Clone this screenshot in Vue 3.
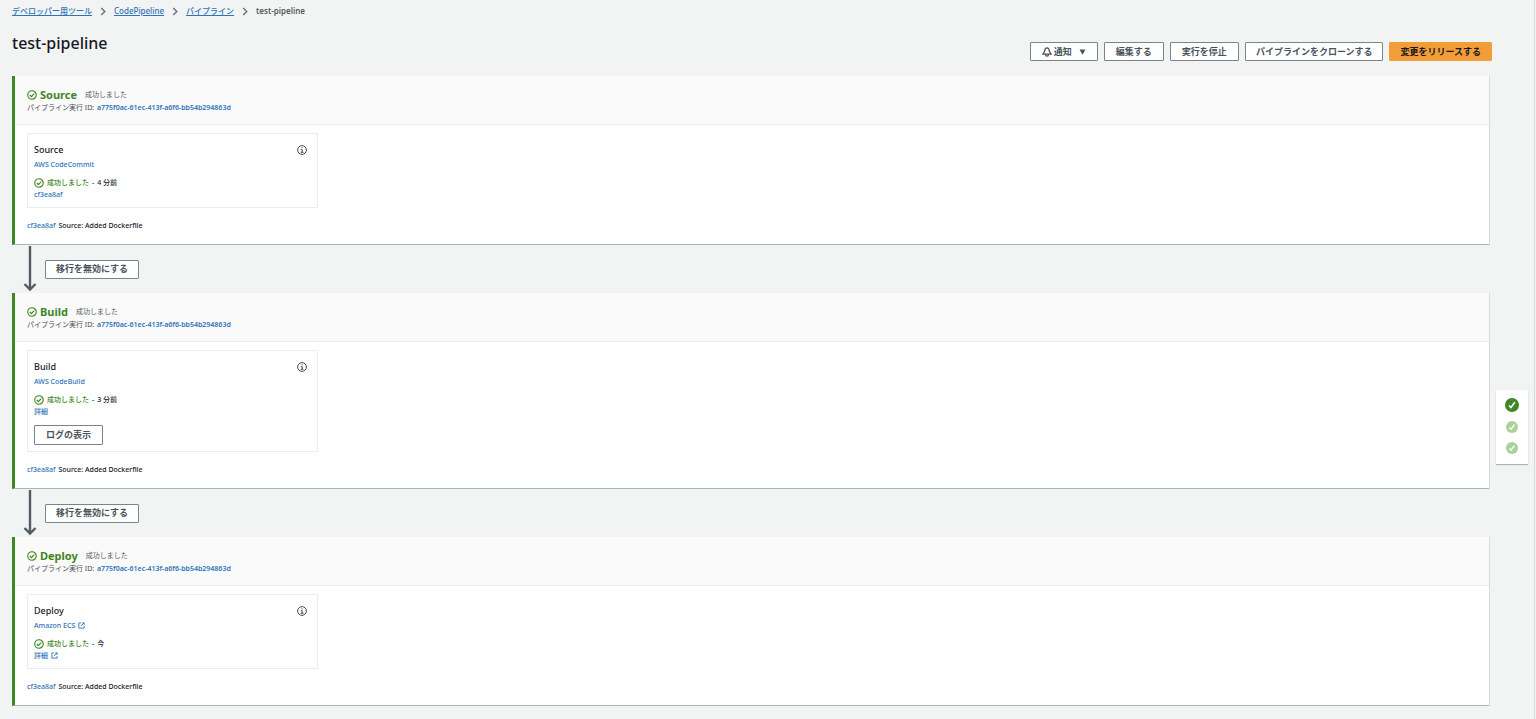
<script setup>
const executionId = 'a775f0ac-61ec-413f-a6f6-bb54b294863d'
const crumbs = ['デベロッパー用ツール', 'CodePipeline', 'パイプライン']
const stages = [
  { name: 'Source', provider: 'AWS CodeCommit', time: '4 分前', detail: 'cf3ea8af', external: false, log: false },
  { name: 'Build', provider: 'AWS CodeBuild', time: '3 分前', detail: '詳細', external: false, log: true },
  { name: 'Deploy', provider: 'Amazon ECS', time: '今', detail: '詳細', external: true, log: false },
]
</script>

<template>
  <div class="page">
    <nav class="crumbs" aria-label="breadcrumb">
      <template v-for="c in crumbs" :key="c">
        <a href="#">{{ c }}</a>
        <svg class="chevron" viewBox="0 0 6 10"><path d="M1 1l4 4-4 4" /></svg>
      </template>
      <span class="current">test-pipeline</span>
    </nav>

    <header class="head">
      <h1>test-pipeline</h1>
      <div class="actions">
        <button type="button" class="btn">
          <svg class="bell" viewBox="0 0 16 16"><path d="M8 1.500C5.500 1.500 4.500 4 4.200 7L1.300 11.500H14.700L11.800 7C11.500 4 10.500 1.500 8 1.500ZM5.500 11.500C5.500 15.500 10.500 15.500 10.500 11.500" /></svg>
          <span>通知</span>
          <svg class="caret" viewBox="0 0 8 8"><path d="M0 0.500h8L4 7.500z" /></svg>
        </button>
        <button type="button" class="btn">編集する</button>
        <button type="button" class="btn">実行を停止</button>
        <button type="button" class="btn long">パイプラインをクローンする</button>
        <button type="button" class="btn long primary">変更をリリースする</button>
      </div>
    </header>

    <main class="stages">
      <template v-for="(s, i) in stages" :key="s.name">
        <div v-if="i > 0" class="transition">
          <svg class="arrow" viewBox="0 0 14 46"><path d="M7 0v43M1.500 38L7 43.500 12.500 38" /></svg>
          <button type="button" class="btn long">移行を無効にする</button>
        </div>
        <section class="stage">
          <div class="stage-head">
            <div class="stage-title">
              <svg class="ok" viewBox="0 0 16 16"><circle cx="8" cy="8" r="6.800" /><path d="M4.500 8l2.500 2.700L11.500 5.800" /></svg>
              <h2>{{ s.name }}</h2>
              <span class="state">成功しました</span>
            </div>
            <p class="exec">パイプライン実行 ID: <a href="#">{{ executionId }}</a></p>
          </div>
          <div class="stage-body">
            <article class="card">
              <div class="card-title">
                <h3>{{ s.name }}</h3>
                <button type="button" class="info" :aria-label="s.name">
                  <svg viewBox="0 0 16 16"><circle cx="8" cy="8" r="7" /><path d="M6 7.500h2.300v4M5.800 11.700h4.600M7.300 4.500h1.700" /></svg>
                </button>
              </div>
              <p class="provider">
                <a href="#">{{ s.provider }}<svg v-if="s.external" class="ext" viewBox="0 0 16 16"><path d="M7 2H2v12h12V9M9.500 2H14v4.500M14 2L6.500 9.500" /></svg></a>
              </p>
              <p class="status">
                <svg class="ok" viewBox="0 0 16 16"><circle cx="8" cy="8" r="6.800" /><path d="M4.500 8l2.500 2.700L11.500 5.800" /></svg>
                <span class="green">成功しました</span>
                <span>-</span>
                <span>{{ s.time }}</span>
              </p>
              <p class="detail">
                <a href="#">{{ s.detail }}<svg v-if="s.external" class="ext" viewBox="0 0 16 16"><path d="M7 2H2v12h12V9M9.500 2H14v4.500M14 2L6.500 9.500" /></svg></a>
              </p>
              <button v-if="s.log" type="button" class="btn log">ログの表示</button>
            </article>
            <p class="revision"><a href="#">cf3ea8af</a><span>Source: Added Dockerfile</span></p>
          </div>
        </section>
      </template>
    </main>

    <aside class="minimap">
      <svg v-for="(s, i) in stages" :key="s.name" :class="['dot', { active: i === 0 }]" viewBox="0 0 14 14">
        <circle cx="7" cy="7" r="7" /><path d="M4 7.500l2 2L9.800 4.300" />
      </svg>
    </aside>
  </div>
</template>

<style>
body {
  background: #f2f3f3;
}
</style>

<style scoped>
.page {
  box-sizing: border-box;
  min-height: 100vh;
  margin-right: 1px;
  padding: 4px 0 12px 12px;
  border-right: 1px solid #d5dbdb;
  font-family: "Noto Sans", "Noto Sans CJK JP", sans-serif;
  font-size: 7px;
  line-height: 12px;
  color: #16191f;
}
h1, h2, h3, p {
  margin: 0;
}
a {
  color: #2e73b8;
  text-decoration: none;
}
svg {
  display: block;
  flex: none;
  fill: none;
  stroke: currentColor;
}
.crumbs {
  display: flex;
  align-items: center;
  gap: 8px;
  height: 14px;
  font-size: 8px;
}
.crumbs a {
  font-weight: 500;
  text-decoration: underline;
}
.chevron {
  width: 6px;
  height: 9px;
  color: #687078;
  stroke-width: 1.5;
}
.current {
  color: #545b64;
  font-weight: 600;
}
.head {
  display: flex;
  justify-content: space-between;
  align-items: flex-start;
  padding: 14px 42px 15px 0;
}
h1 {
  font-size: 16px;
  line-height: 22px;
  font-weight: 500;
}
.actions {
  display: flex;
  gap: 6px;
  padding-top: 10px;
}
.btn {
  display: flex;
  align-items: center;
  justify-content: center;
  box-sizing: border-box;
  height: 19px;
  padding: 0 11px;
  border: 1px solid #7b838b;
  border-radius: 1px;
  background: #fff;
  color: #4b525b;
  font-family: inherit;
  font-size: 9px;
  line-height: 12px;
  font-weight: 700;
  white-space: nowrap;
}
.long {
  padding: 0 10px;
}
.primary {
  border-color: #f29d38;
  background: #f29d38;
  color: #16191f;
}
.bell {
  width: 10px;
  height: 10px;
  margin-right: 2px;
  stroke-width: 2;
}
.caret {
  width: 7px;
  height: 6px;
  margin-left: 7px;
  fill: currentColor;
  stroke: none;
}
.stages {
  margin-right: 45px;
}
.stage {
  border-left: 3px solid #3f8624;
  border-bottom: 1px solid #aab7b8;
  box-shadow: 1px 0 0 #d5dbdb;
  background: #fff;
}
.stage-head {
  padding: 12px 12px 10px;
  border-bottom: 1px solid #eaeded;
  background: #fafafa;
  line-height: 13px;
}
.stage-title {
  display: flex;
  align-items: center;
}
.ok {
  width: 10px;
  height: 10px;
  color: #3f8624;
  stroke-width: 1.8;
}
h2 {
  margin-left: 3px;
  font-size: 11px;
  line-height: 13px;
  font-weight: 700;
  color: #3f8624;
}
.state {
  margin-left: 8px;
  color: #545b64;
}
.exec {
  color: #444b54;
}
.exec a {
  margin-left: 1px;
  font-weight: 600;
}
.stage-body {
  padding: 8px 12px 12px;
}
.card {
  box-sizing: border-box;
  width: 291px;
  max-width: 100%;
  padding: 10px 6px 6px;
  border: 1px solid #eaeded;
}
.card-title {
  display: flex;
  align-items: center;
  justify-content: space-between;
  height: 12px;
}
h3 {
  font-size: 9px;
  font-weight: 500;
}
.info {
  margin-right: 4px;
  padding: 0;
  border: 0;
  background: none;
  color: #444b54;
}
.info svg {
  width: 10px;
  height: 10px;
  stroke-width: 1.6;
}
.provider {
  margin-top: 3px;
  font-weight: 500;
}
.detail {
  font-weight: 500;
}
.status {
  display: flex;
  align-items: center;
  gap: 3px;
  margin-top: 6px;
  font-weight: 500;
}
.green {
  color: #3f8624;
}
.ext {
  display: inline-block;
  width: 7px;
  height: 7px;
  margin-left: 3px;
  vertical-align: -1px;
  stroke-width: 2;
}
.log {
  height: 20px;
  margin-top: 7px;
}
.revision {
  display: flex;
  gap: 3px;
  margin-top: 12px;
  font-weight: 500;
}
.transition {
  display: flex;
  align-items: center;
  gap: 8px;
  height: 48px;
  padding-left: 11px;
}
.arrow {
  width: 14px;
  height: 46px;
  color: #545b64;
  stroke-width: 2.4;
}
.minimap {
  position: fixed;
  top: 390px;
  right: 8px;
  display: flex;
  flex-direction: column;
  align-items: center;
  gap: 9px;
  box-sizing: border-box;
  width: 32px;
  padding: 8px 0 10px;
  background: #fff;
  box-shadow: 0 1px 1px #aab7b8;
}
.dot {
  width: 12px;
  height: 12px;
  stroke: none;
}
.dot circle {
  fill: #abd09a;
}
.dot path {
  stroke: #fff;
  stroke-width: 1.6;
}
.active {
  width: 14px;
  height: 14px;
}
.active circle {
  fill: #3f8624;
}
</style>
